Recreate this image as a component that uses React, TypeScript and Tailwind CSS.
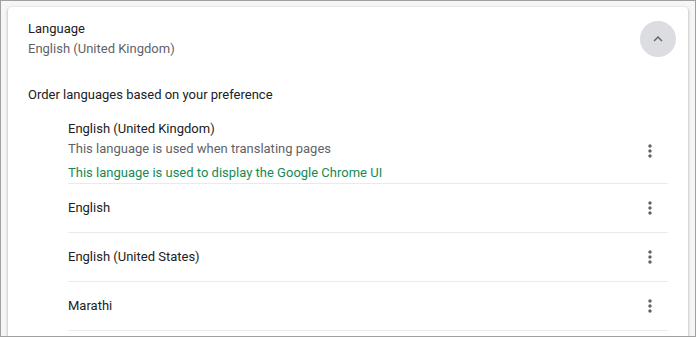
import React from 'react'

// Chrome settings: Languages section

const languages = ['English', 'English (United States)', 'Marathi']

function MoreIcon() {
  return (
    <svg viewBox="0 0 24 24" className="w-5 h-5 fill-[#5f6368]">
      <path d="M12 8c1.1 0 2-.9 2-2s-.9-2-2-2-2 .9-2 2 .9 2 2 2zm0 2c-1.1 0-2 .9-2 2s.9 2 2 2 2-.9 2-2-.9-2-2-2zm0 6c-1.1 0-2 .9-2 2s.9 2 2 2 2-.9 2-2-.9-2-2-2z" />
    </svg>
  )
}

function MoreButton() {
  return (
    <button className="w-9 h-9 flex items-center justify-center rounded-full shrink-0" aria-label="More actions">
      <MoreIcon />
    </button>
  )
}

export default function App() {
  return (
    <div
      className="w-[696px] h-[337px] overflow-hidden border border-[#a0a0a0] bg-[#f5f6f7] pt-[6px] px-[7px]"
      style={{ fontFamily: 'Roboto, "Liberation Sans", sans-serif' }}
    >
      <div className="bg-white rounded-[4px] shadow-[0_1px_2px_rgba(60,64,67,0.3),0_1px_3px_1px_rgba(60,64,67,0.15)] h-[340px]">
        {/* Header */}
        <div className="flex items-center h-[64px] pl-[20px] pr-[12px]">
          <div className="flex-1 text-[13px] leading-[20px]">
            <div className="text-[#202124]">Language</div>
            <div className="text-[#5f6368]">English (United Kingdom)</div>
          </div>
          <button className="w-9 h-9 rounded-full bg-[#dcdde0] flex items-center justify-center" aria-label="Collapse">
            <svg viewBox="0 0 24 24" className="w-[18px] h-[18px] fill-[#5f6368]">
              <path d="M12 8l-6 6 1.41 1.41L12 10.83l4.59 4.58L18 14z" />
            </svg>
          </button>
        </div>

        {/* Order languages */}
        <div className="pl-[20px] pt-[14px] pb-[13px] text-[13px] leading-[20px] text-[#202124]">
          Order languages based on your preference
        </div>

        <div className="ml-[60px] mr-[20px]">
          <div className="flex items-center border-b border-[#e8eaed] h-[66px]">
            <div className="flex-1 text-[13px] leading-[20px]">
              <div className="text-[#202124]">English (United Kingdom)</div>
              <div className="text-[#5f6368]">This language is used when translating pages</div>
              <div className="text-[#168a55] mt-[4px]">This language is used to display the Google Chrome UI</div>
            </div>
            <MoreButton />
          </div>
          {languages.map((lang) => (
            <div key={lang} className="flex items-center border-b border-[#e8eaed] h-[49px]">
              <div className="flex-1 text-[13px] leading-[20px] text-[#202124]">{lang}</div>
              <MoreButton />
            </div>
          ))}
        </div>
      </div>
    </div>
  )
}
